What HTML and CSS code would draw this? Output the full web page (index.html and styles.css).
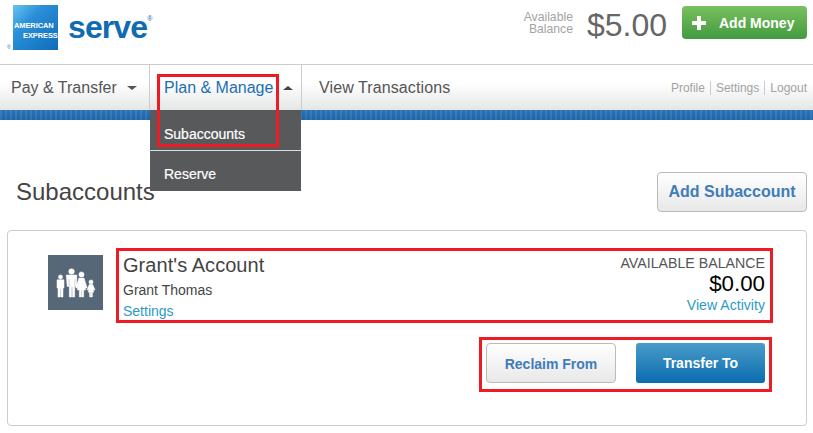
FILE: index.html
```html
<!DOCTYPE html>
<html lang="en">
<head>
<meta charset="utf-8">
<title>Subaccounts</title>
<link rel="stylesheet" href="styles.css">
</head>
<body>
<header class="top">
  <div class="brand">
    <span class="reg-small">®</span>
    <div class="amex"><span class="amex-a">AMERICAN</span><span class="amex-b">EXPRESS</span></div>
    <div class="serve">serve<sup class="reg">®</sup></div>
  </div>
  <div class="balance">
    <div class="balance-label">Available<br>Balance</div>
    <div class="balance-amount">$5.00</div>
    <a class="add-money"><svg class="plus" viewBox="0 0 14 14" width="14" height="14"><path d="M5 0h4v5h5v4H9v5H5V9H0V5h5z" fill="#fff"/></svg><span>Add Money</span></a>
  </div>
</header>
<nav class="nav">
  <div class="nav-item pay">Pay &amp; Transfer<span class="caret down"></span></div>
  <div class="nav-item plan"><span class="plan-label">Plan &amp; Manage</span><span class="caret up"></span>
    <div class="menu">
      <div class="menu-item first">Subaccounts</div>
      <div class="menu-item second">Reserve</div>
    </div>
  </div>
  <div class="nav-item view">View Transactions</div>
  <div class="util"><span>Profile</span><span>Settings</span><span>Logout</span></div>
</nav>
<div class="band"></div>
<div class="mark mark-nav"></div>
<main class="main">
  <div class="title-row">
    <h1 class="title">Subaccounts</h1>
    <a class="btn btn-light add-sub">Add Subaccount</a>
  </div>
  <section class="card">
    <div class="card-row">
      <div class="avatar">
        <svg viewBox="0 0 55 55" width="55" height="55">
          <g fill="#fff" stroke="#fff" stroke-width="0.5">
            <circle cx="12.500" cy="22" r="2.100"/>
            <path d="M9 24.800h7v8.200h-1v9h-2.200v-8h-.6v8H10v-9H9z"/>
            <circle cx="23.500" cy="16.500" r="2.800"/>
            <path d="M18.200 20h10.600v11.500h-1.600V24h-.5v18h-2.300V32h-.8v10h-2.300V24h-.5v7.500h-1.600z"/>
            <circle cx="33.500" cy="19.500" r="2.600"/>
            <path d="M31 23h5l3.200 10h-1.700l-1.600-5.500 1.800 7.500h-2v7h-1.900v-7h-.6v7h-1.900v-7h-2l1.800-7.500-1.600 5.500h-1.700z"/>
            <circle cx="43" cy="27" r="2.100"/>
            <path d="M41.200 29.500h3.600l2.200 5.500h-1.300l-.6-1.500.6 3.700h-1.300V42h-1.200v-4.800h-.4V42h-1.200v-4.800h-1.300l.6-3.700-.6 1.500h-1.300z"/>
          </g>
        </svg>
      </div>
      <div class="summary">
        <div class="owner">
          <div class="account-name">Grant's Account</div>
          <div class="person">Grant Thomas</div>
          <a class="link settings">Settings</a>
        </div>
        <div class="funds">
          <div class="funds-label">AVAILABLE BALANCE</div>
          <div class="funds-amount">$0.00</div>
          <a class="link view-activity">View Activity</a>
        </div>
      </div>
    </div>
    <div class="actions">
      <a class="btn btn-light reclaim">Reclaim From</a>
      <a class="btn btn-blue transfer">Transfer To</a>
    </div>
  </section>
</main>
</body>
</html>
```
FILE: styles.css
```css
* { box-sizing: border-box; }
html, body { margin: 0; background: #fff; }
body {
  position: relative;
  width: 813px;
  height: 433px;
  overflow: hidden;
  font-family: "Liberation Sans", Arial, sans-serif;
  color: #444;
}
.top {
  height: 64px;
  display: flex;
  justify-content: space-between;
  padding: 5px 6px 0 7px;
}
.brand { display: flex; align-items: flex-start; }
.reg-small { width: 6px; margin-top: 39px; font-size: 5px; color: #2a6fb0; }
.amex {
  width: 45px;
  height: 45px;
  background: linear-gradient(135deg, #6cc4ef 0%, #2a8fd8 35%, #0f6cb8 100%);
  color: #fff;
  font-size: 7.500px;
  font-weight: bold;
  line-height: 10px;
  padding-top: 16px;
  display: flex;
  flex-direction: column;
  white-space: nowrap;
  overflow: hidden;
}
.amex-a { padding-left: 1px; letter-spacing: -0.1px; }
.amex-b { padding-left: 10px; letter-spacing: -0.1px; }
.serve {
  margin: 2px 0 0 10px;
  font-size: 32px;
  line-height: 40px;
  font-weight: bold;
  color: #0f6cb2;
  letter-spacing: -0.9px;
}
.reg { font-size: 7px; font-weight: normal; vertical-align: 17px; line-height: 0; letter-spacing: 0; }
.balance { display: flex; align-items: flex-start; }
.balance-label {
  margin: 6px 14px 0 0;
  font-size: 12.200px;
  line-height: 12px;
  text-align: right;
  color: #a3a3a3;
}
.balance-amount {
  margin: 1px 15px 0 0;
  font-size: 32px;
  line-height: 38px;
  color: #666;
}
.add-money {
  width: 125px;
  height: 33px;
  margin-top: 1px;
  border-radius: 4px;
  background: linear-gradient(#7ac05f, #429a40);
  color: #fff;
  font-size: 14px;
  font-weight: bold;
  display: flex;
  align-items: center;
  padding-left: 10px;
  gap: 13px;
}
.nav {
  height: 46px;
  border-top: 1px solid #ccc;
  background: linear-gradient(#fff 40%, #e5e6e6);
  display: flex;
  align-items: center;
  font-size: 16px;
  color: #555;
}
.nav-item { height: 45px; display: flex; align-items: center; }
.pay { width: 150px; padding-left: 11px; border-right: 1px solid #ccc; }
.plan {
  position: relative;
  width: 152px;
  padding-left: 14px;
  border-right: 1px solid #ccc;
}
.plan-label { color: #1b6fb5; }
.view { padding-left: 17px; letter-spacing: 0.1px; }
.caret { width: 0; height: 0; border-left: 5px solid transparent; border-right: 5px solid transparent; }
.caret.down { border-top: 4px solid #555; margin-left: 10px; }
.caret.up { border-bottom: 4px solid #444; margin-left: 10px; }
.menu {
  position: absolute;
  left: 0;
  top: 45px;
  width: 151px;
  height: 81px;
  background: #58595b;
  color: #fff;
  font-size: 14px;
  -webkit-text-stroke: 0.2px #fff;
}
.menu-item { display: flex; align-items: center; padding-left: 14px; }
.first { height: 41px; padding-top: 8px; border-bottom: 1px solid #ddd; }
.second { height: 40px; padding-top: 5px; }
.util { margin-left: auto; padding-right: 6px; display: flex; font-size: 12px; color: #a3a3a3; }
.util span { padding: 0 5px; border-right: 1px solid #ccc; line-height: 14px; }
.util span:last-child { border-right: 0; padding-right: 0; }
.band {
  height: 10px;
  background-color: #1f6db3;
  background-image:
    linear-gradient(rgba(255,255,255,.06), rgba(0,0,0,.03)),
    repeating-linear-gradient(90deg, rgba(255,255,255,.07) 0 2px, rgba(0,0,0,.04) 2px 5px);
}
.mark {
  position: absolute;
  border: 3px solid #ed1c24;
  pointer-events: none;
}
.mark-nav { left: 157px; top: 74px; width: 122px; height: 73px; }
.main { padding: 52px 6px 0 7px; }
.title-row { display: flex; justify-content: space-between; align-items: flex-start; }
.title {
  margin: 6px 0 0 9px;
  font-size: 24px;
  line-height: 28px;
  font-weight: normal;
  color: #444;
}
.btn {
  height: 40px;
  display: flex;
  align-items: center;
  justify-content: center;
  border-radius: 4px;
  font-weight: bold;
}
.btn-light {
  border: 1px solid #bbb;
  background: linear-gradient(#fff, #e8e8e8);
  color: #3f7cb9;
}
.add-sub { width: 150px; font-size: 16px; }
.card {
  margin-top: 18px;
  height: 196px;
  border: 1px solid #ccc;
  border-radius: 4px;
  padding: 17px 33px 0 40px;
}
.card-row { display: flex; align-items: flex-start; gap: 13px; }
.avatar { width: 55px; height: 55px; margin-top: 7px; background: #566778; }
.avatar svg { display: block; }
.summary {
  flex: 1;
  height: 75px;
  border: 3px solid #ed1c24;
  padding: 1px 5px 0 4px;
  display: flex;
  justify-content: space-between;
}
.account-name { font-size: 20px; line-height: 26px; letter-spacing: 0.05px; color: #444; }
.person { font-size: 14px; line-height: 20px; margin-top: 2px; color: #444; }
.link { display: block; font-size: 14px; line-height: 20px; color: #2a9bc4; }
.settings { margin-top: 1px; }
.funds { text-align: right; }
.funds-label { font-size: 14.200px; line-height: 19px; margin-top: 2px; color: #555; }
.funds-amount { font-size: 22.300px; line-height: 24px; margin-top: -1px; color: #000; }
.view-activity { line-height: 18px; letter-spacing: 0.05px; }
.actions {
  width: 293px;
  height: 55px;
  margin: 14px 1px 0 auto;
  border: 3px solid #ed1c24;
  padding: 3px 4px 0;
  display: flex;
  justify-content: space-between;
}
.reclaim { width: 130px; font-size: 14px; padding-top: 1px; }
.btn-blue {
  background: linear-gradient(#4a9cc9, #0a6cb0);
  color: #fff;
  border-radius: 3px;
}
.transfer { width: 129px; font-size: 14px; padding-bottom: 1px; }
```
